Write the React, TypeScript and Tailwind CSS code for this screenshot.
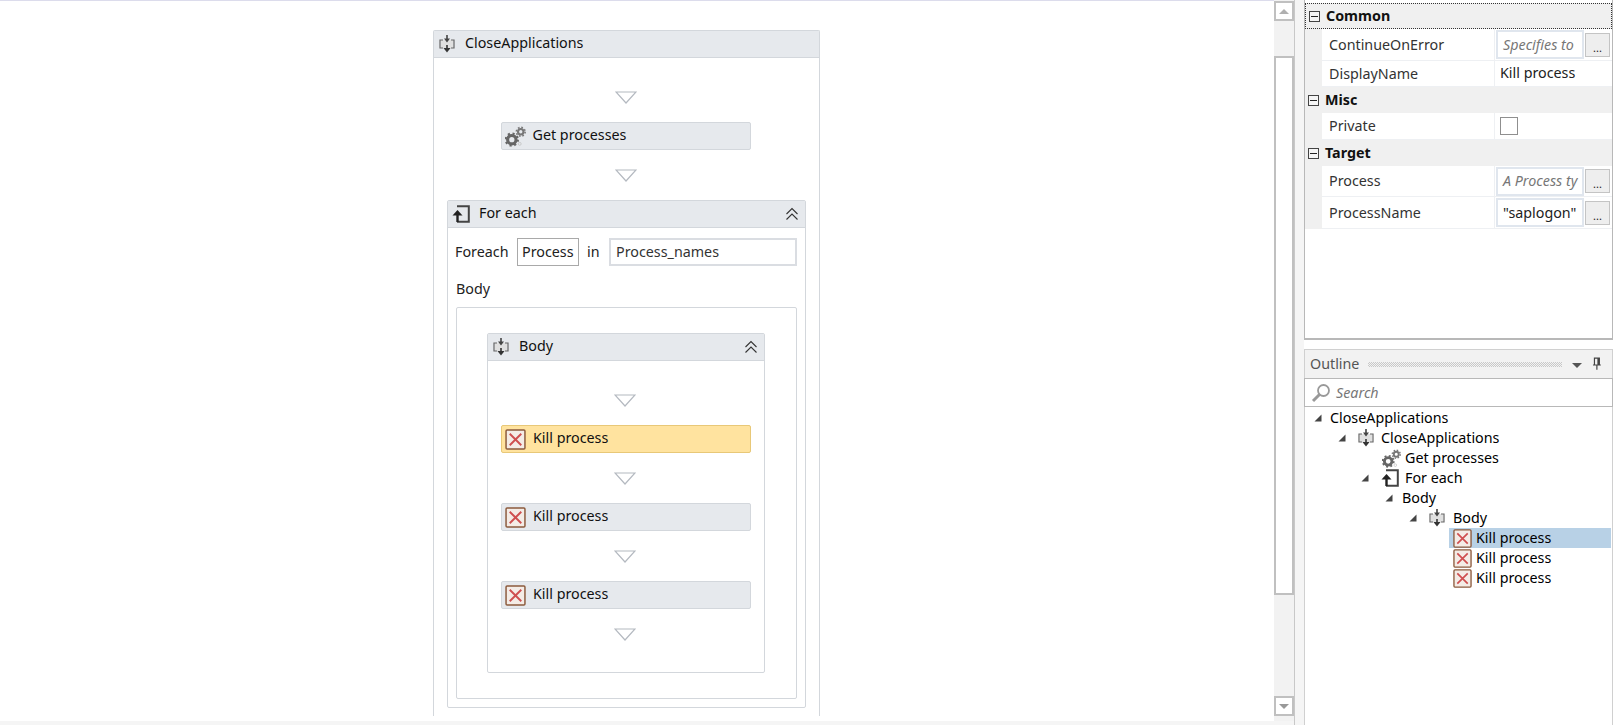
const SequenceIcon = ({ className = "" }: { className?: string }) => (
  <svg viewBox="0 0 18 18" className={className}>
    <rect x="3" y="5" width="12" height="8" fill="#e0e0e0" />
    <path d="M5 5H2V13H5M13 5H16V13H13" fill="none" stroke="#666" strokeWidth="1.2" />
    <path d="M9 0V4" stroke="#444" strokeWidth="1.6" />
    <path d="M6 3.5H12L9 7.5Z" fill="#444" />
    <path d="M9 10V14" stroke="#333" strokeWidth="1.6" />
    <path d="M5.5 13H12.5L9 17.5Z" fill="#333" />
  </svg>
);

const GearsIcon = ({ className = "" }: { className?: string }) => (
  <svg viewBox="0 0 20 20" className={className}>
    <circle cx="6.5" cy="13" r="4" fill="none" stroke="#666" strokeWidth="3" />
    <circle cx="6.5" cy="13" r="5.8" fill="none" stroke="#666" strokeWidth="2" strokeDasharray="2 2.55" />
    <circle cx="15" cy="5.5" r="2.6" fill="none" stroke="#777" strokeWidth="2" />
    <circle cx="15" cy="5.5" r="4.2" fill="none" stroke="#777" strokeWidth="1.5" strokeDasharray="1.6 1.7" />
    <circle cx="14" cy="17" r="1.4" fill="none" stroke="#c4c4c4" strokeWidth="0.8" />
  </svg>
);

const ForEachIcon = ({ className = "" }: { className?: string }) => (
  <svg viewBox="0 0 18 18" className={className}>
    <path d="M5 1.2H16.8V16.8H5" fill="none" stroke="#444" strokeWidth="2" />
    <path d="M5.5 17V9" fill="none" stroke="#222" strokeWidth="2.4" />
    <path d="M0.5 10.5L5.5 5L10.5 10.5Z" fill="#222" />
  </svg>
);

const KillIcon = ({ className = "" }: { className?: string }) => (
  <svg viewBox="0 0 20 20" className={className}>
    <rect x="1" y="1" width="18" height="18" rx="1" fill="#f4ece6" stroke="#8c5a3c" strokeWidth="1.4" />
    <path d="M4.5 4.5L15.5 15.5M15.5 4.5L4.5 15.5" stroke="#cf4f50" strokeWidth="1.8" />
  </svg>
);

const DoubleChevron = () => (
  <svg viewBox="0 0 14 14" className="w-[14px] h-[14px]">
    <path d="M1.5 7L7 1.5L12.5 7M1.5 12.5L7 7L12.5 12.5" fill="none" stroke="#333" strokeWidth="1.1" />
  </svg>
);

const FlowArrow = ({ className = "" }: { className?: string }) => (
  <svg viewBox="0 0 22 13" className={`w-[22px] h-[13px] block ${className}`}>
    <path d="M1 1H21L11 12Z" fill="white" stroke="#b4b9c0" strokeWidth="1.2" />
  </svg>
);

const Activity = ({
  icon,
  label,
  active = false,
  className = "",
}: {
  icon: React.ReactNode;
  label: string;
  active?: boolean;
  className?: string;
}) => (
  <div
    className={`w-[250px] h-[28px] shrink-0 flex items-center pl-[3px] rounded-[2px] border text-[#111] ${
      active ? "bg-[#ffe39f] border-[#e8c878]" : "bg-[#e6e9ed] border-[#d3d7dc]"
    } ${className}`}
  >
    <span className="w-[21px] h-[21px] shrink-0">{icon}</span>
    <span className="ml-[7px] -mt-[2px]">{label}</span>
  </div>
);

const CardHeader = ({ icon, label, collapse = false }: { icon: React.ReactNode; label: string; collapse?: boolean }) => (
  <div className="h-[27px] shrink-0 flex items-center bg-[#e6e9ed] border-b border-[#d3d7dc] pl-[4px] pr-[6px] text-[#111]">
    <span className="w-[18px] h-[18px] shrink-0">{icon}</span>
    <span className="ml-[9px] -mt-[3px] flex-1">{label}</span>
    {collapse && <DoubleChevron />}
  </div>
);

const ExpandBox = () => (
  <span className="w-[11px] h-[11px] border border-[#444] bg-[#f5f5f5] flex items-center justify-center shrink-0">
    <span className="w-[7px] h-px bg-[#222]" />
  </span>
);

const CategoryRow = ({ label, height, dotted = false }: { label: string; height: string; dotted?: boolean }) => (
  <div
    className={`${height} flex items-center pl-[3px] bg-[#f0f0f0] ${
      dotted ? "border border-dotted border-[#333]" : ""
    }`}
  >
    <ExpandBox />
    <span className="ml-[6px] font-bold text-[#111]">{label}</span>
  </div>
);

const EllipsisButton = () => (
  <span className="w-[25px] h-[24px] ml-[1px] shrink-0 bg-[#eeeeee] border border-[#c4c4c4] flex items-end justify-center text-[11px] leading-[16px] text-[#222]">
    ...
  </span>
);

const TextValue = ({ text, hint = false }: { text: string; hint?: boolean }) => (
  <div className="flex items-center h-full pl-[1px]">
    <span
      className={`w-[88px] h-[29px] shrink-0 border-2 border-[#e0e6ee] bg-white flex items-center pl-[5px] overflow-hidden whitespace-nowrap ${
        hint ? "italic text-[#777]" : "text-[#222]"
      }`}
    >
      {text}
    </span>
    <EllipsisButton />
  </div>
);

const PropertyRow = ({ name, height, children }: { name: string; height: string; children: React.ReactNode }) => (
  <div className={`${height} flex bg-[#f0f0f0] pl-[17px]`}>
    <div className="flex flex-1 bg-white border-b border-[#eef0f3]">
      <span className="w-[173px] shrink-0 border-r border-[#eef0f3] pl-[7px] flex items-center text-[#333]">{name}</span>
      <div className="flex-1">{children}</div>
    </div>
  </div>
);

const TreeArrow = () => (
  <svg viewBox="0 0 8 8" className="w-[8px] h-[8px] shrink-0">
    <path d="M7.5 0.5V7.5H0.5Z" fill="#444" />
  </svg>
);

const OutlineTree = () => (
  <div className="pt-px text-black leading-[20px]">
    <div className="h-[20px] flex items-center pl-[9px]">
      <TreeArrow />
      <span className="ml-[8px] -mt-px">CloseApplications</span>
    </div>
    <div className="h-[20px] flex items-center pl-[33px]">
      <TreeArrow />
      <SequenceIcon className="w-[18px] h-[18px] ml-[11px]" />
      <span className="ml-[6px]">CloseApplications</span>
    </div>
    <div className="h-[20px] flex items-center pl-[77px]">
      <GearsIcon className="w-[19px] h-[19px] shrink-0" />
      <span className="ml-[4px]">Get processes</span>
    </div>
    <div className="h-[20px] flex items-center pl-[56px]">
      <TreeArrow />
      <ForEachIcon className="w-[18px] h-[18px] ml-[12px]" />
      <span className="ml-[6px]">For each</span>
    </div>
    <div className="h-[20px] flex items-center pl-[80px]">
      <TreeArrow />
      <span className="ml-[9px]">Body</span>
    </div>
    <div className="h-[20px] flex items-center pl-[104px]">
      <TreeArrow />
      <SequenceIcon className="w-[18px] h-[18px] ml-[11px]" />
      <span className="ml-[7px]">Body</span>
    </div>
    <div className="h-[20px] flex items-center ml-[144px] mr-[1px] pl-[4px] bg-[#b8d1e6]">
      <KillIcon className="w-[19px] h-[19px] shrink-0" />
      <span className="ml-[4px]">Kill process</span>
    </div>
    <div className="h-[20px] flex items-center ml-[144px] pl-[4px]">
      <KillIcon className="w-[19px] h-[19px] shrink-0" />
      <span className="ml-[4px]">Kill process</span>
    </div>
    <div className="h-[20px] flex items-center ml-[144px] pl-[4px]">
      <KillIcon className="w-[19px] h-[19px] shrink-0" />
      <span className="ml-[4px]">Kill process</span>
    </div>
  </div>
);

const Canvas = () => (
  <div className="w-[1274px] h-[716px] overflow-hidden border-t border-[#dcdcec] pl-[433px] pt-[29px]">
    <div className="w-[387px] h-[720px] rounded-t-[2px] border border-b-0 border-[#d3d7dc] flex flex-col">
      <CardHeader icon={<SequenceIcon className="w-[18px] h-[18px]" />} label="CloseApplications" />
      <div className="flex flex-col items-center pt-[33px]">
        <FlowArrow className="mr-[1px]" />
        <Activity
          icon={<GearsIcon className="w-[21px] h-[21px]" />}
          label="Get processes"
          className="mt-[18px] mr-[2px]"
        />
        <FlowArrow className="mt-[19px] mr-[1px]" />
      </div>

      <div className="w-[359px] h-[508px] ml-[13px] mt-[18px] shrink-0 rounded-[2px] border border-[#d3d7dc] flex flex-col">
        <CardHeader icon={<ForEachIcon className="w-[18px] h-[18px]" />} label="For each" collapse />
        <div className="flex items-center h-[28px] mt-[10px] pl-[7px] text-[#222]">
          <span className="w-[62px]">Foreach</span>
          <span className="w-[62px] h-[28px] border border-[#a9a9a9] pl-[4px] flex items-center">Process</span>
          <span className="ml-[8px] w-[22px]">in</span>
          <span className="w-[188px] h-[28px] border-2 border-[#dadde2] pl-[5px] flex items-center text-[#333]">Process_names</span>
        </div>
        <div className="h-[41px] pl-[8px] pt-[5px] flex items-center text-[#222]">Body</div>
        <div className="mx-[8px] h-[392px] rounded-[2px] border border-[#d3d7dc] pt-[25px] pl-[30px]">
          <div className="w-[278px] h-[340px] rounded-[2px] border border-[#d3d7dc] flex flex-col">
            <CardHeader icon={<SequenceIcon className="w-[18px] h-[18px]" />} label="Body" collapse />
            <div className="flex flex-col items-center pt-[33px]">
              <FlowArrow className="mr-[2px]" />
              <Activity active icon={<KillIcon className="w-[21px] h-[21px]" />} label="Kill process" className="mt-[18px]" />
              <FlowArrow className="mt-[19px] mr-[2px]" />
              <Activity icon={<KillIcon className="w-[21px] h-[21px]" />} label="Kill process" className="mt-[18px]" />
              <FlowArrow className="mt-[19px] mr-[2px]" />
              <Activity icon={<KillIcon className="w-[21px] h-[21px]" />} label="Kill process" className="mt-[18px]" />
              <FlowArrow className="mt-[19px] mr-[2px]" />
            </div>
          </div>
        </div>
      </div>
    </div>
  </div>
);

const ScrollBar = () => (
  <div className="w-[21px] h-[721px] bg-[#f2f2f2] border-r border-[#c8c8c8] flex flex-col">
    <div className="w-[20px] h-[20px] mt-[1px] border-2 border-[#c0c0c0] bg-white flex items-center justify-center">
      <span className="w-0 h-0 border-x-[5px] border-x-transparent border-b-[5px] border-b-[#b0b0b0]" />
    </div>
    <div className="w-[20px] h-[539px] mt-[35px] border-2 border-[#c0c0c0] bg-white" />
    <div className="w-[20px] h-[20px] mt-[101px] border-2 border-[#c0c0c0] bg-white flex items-center justify-center">
      <span className="w-0 h-0 border-x-[5px] border-x-transparent border-t-[5px] border-t-[#999]" />
    </div>
  </div>
);

const PropertiesPanel = () => (
  <div className="h-[340px] border-x border-b-2 border-[#b8b8b8] bg-white pt-[3px]">
    <CategoryRow label="Common" height="h-[26px]" dotted />
    <PropertyRow name="ContinueOnError" height="h-[32px]">
      <TextValue text="Specifies to" hint />
    </PropertyRow>
    <PropertyRow name="DisplayName" height="h-[26px]">
      <span className="h-full flex items-center pl-[5px] -mt-[1px] text-[#222]">Kill process</span>
    </PropertyRow>
    <CategoryRow label="Misc" height="h-[26px]" />
    <PropertyRow name="Private" height="h-[27px]">
      <span className="h-full flex items-center pl-[5px]">
        <span className="w-[18px] h-[18px] border border-[#8f8f8f] bg-white" />
      </span>
    </PropertyRow>
    <CategoryRow label="Target" height="h-[26px]" />
    <PropertyRow name="Process" height="h-[31px]">
      <TextValue text="A Process ty" hint />
    </PropertyRow>
    <PropertyRow name="ProcessName" height="h-[32px]">
      <TextValue text={'"saplogon"'} />
    </PropertyRow>
  </div>
);

const OutlinePanel = () => (
  <div className="flex-1 mt-[9px] border-x border-t border-[#d0d0d0]">
    <div className="h-[28px] bg-[#f2f2f2] flex items-center pl-[5px] pr-[10px] text-[#555]">
      <span>Outline</span>
      <span className="w-[198px] h-[5px] ml-[9px] mr-[1px] bg-[conic-gradient(#c8c8c8_25%,transparent_0_50%,#c8c8c8_0_75%,transparent_0)] bg-[length:2px_2px]" />
      <span className="ml-[9px] mt-[3px] w-0 h-0 border-x-[5px] border-x-transparent border-t-[5px] border-t-[#555]" />
      <svg viewBox="0 0 10 14" className="w-[10px] h-[14px] ml-[10px]">
        <path d="M2.5 1H7.5V8H2.5ZM1 8H9M5 8V13" fill="none" stroke="#444" strokeWidth="1.2" />
        <path d="M5.5 1H7.5V8H5.5Z" fill="#444" />
      </svg>
    </div>
    <div className="h-[29px] border border-[#b8b8b8] -mx-px flex items-center pl-[6px] italic text-[#777]">
      <svg viewBox="0 0 20 20" className="w-[20px] h-[20px] shrink-0">
        <circle cx="12.5" cy="7.5" r="5.5" fill="none" stroke="#999" strokeWidth="1.8" />
        <path d="M8.5 11.5L2 18" stroke="#999" strokeWidth="3" />
      </svg>
      <span className="ml-[5px]">Search</span>
    </div>
    <OutlineTree />
  </div>
);

export default function App() {
  return (
    <div className="w-[1617px] h-[725px] flex overflow-hidden bg-white font-['Noto_Sans',sans-serif] text-[14.3px] leading-[20px]">
      <div className="w-[1295px] flex flex-col">
        <div className="flex h-[721px]">
          <Canvas />
          <ScrollBar />
        </div>
        <div className="flex-1 bg-[#f5f5f5] border-r border-[#c8c8c8]" />
      </div>
      <div className="w-[9px] bg-[#f5f5f5]" />
      <div className="w-[309px] flex flex-col">
        <PropertiesPanel />
        <OutlinePanel />
      </div>
    </div>
  );
}
